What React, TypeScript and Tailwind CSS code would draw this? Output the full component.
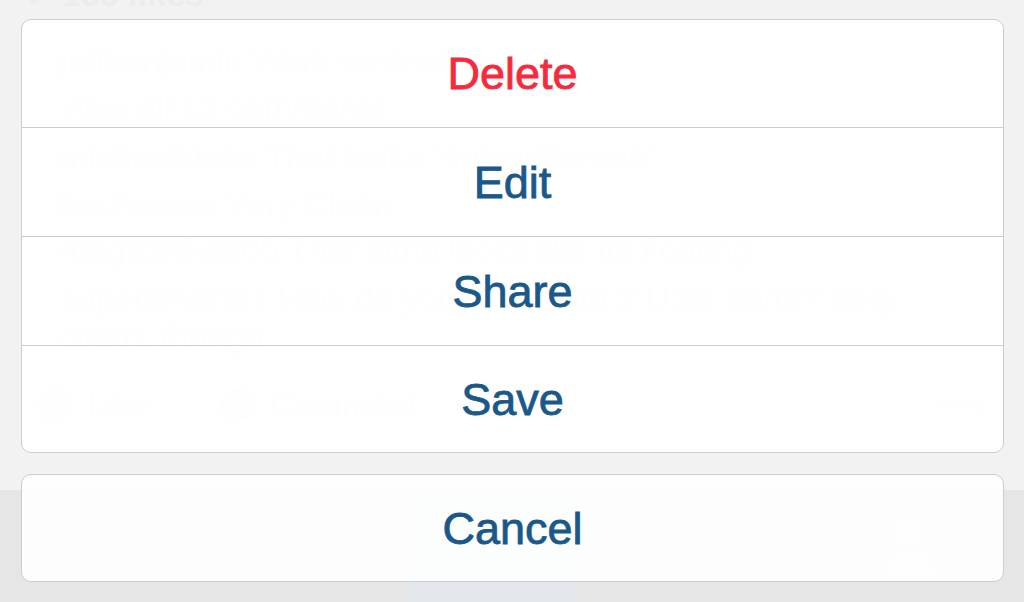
import React from "react";

const comments = [
  { t: "jeffbenjamin Work environment.", mt: "mt-[26px]" },
  { t: "view all 12 comments", mt: "mt-[7px]" },
  { t: "michaelkisan That looks \u201csplendiferous\u201d", mt: "mt-[9px]" },
  { t: "hachemos Very Clean", mt: "mt-[8px]" },
  { t: "magicmike005 That lamp looks like its floating", mt: "mt-[5px]" },
  { t: "supersmart07 How do you work with 2 USB ports? Very", mt: "mt-[9px]" },
  { t: "clean. though", mt: "mt-[-3px]" },
];

function Background() {
  return (
    <div className="flex flex-col h-full">
      <div className="h-[490px] flex flex-col">
        <div className="flex items-center gap-[16px] pl-[20px] mt-[-26px] h-[40px] text-[34px] font-bold text-[#eaedf0] leading-none">
          <svg width="26" height="24" viewBox="0 0 24 22">
            <path d="M12 21 L2.5 11.5 A5.5 5.5 0 0 1 12 3.5 A5.5 5.5 0 0 1 21.5 11.5 Z" fill="#eaedf0" />
          </svg>
          <span>155 likes</span>
        </div>
        <div className="flex flex-col pl-[60px] text-[34px] leading-[40px] text-[#dcdcdc]">
          {comments.map((c, i) => (
            <div key={i} className={c.mt + " whitespace-nowrap"}>
              {c.t}
            </div>
          ))}
        </div>
        <div className="flex items-center mt-[24px] pl-[37px] pr-[40px] text-[34px] text-[#e0e0e0]">
          <div className="w-[35px] h-[35px] rounded-full bg-[#e0e0e0]" />
          <span className="ml-[16px]">Like</span>
          <div className="ml-[70px] w-[35px] h-[33px] rounded-full bg-[#e0e0e0]" />
          <span className="ml-[15px]">Comment</span>
          <div className="ml-auto flex gap-[4px]">
            <div className="w-[13px] h-[13px] rounded-full bg-[#e0e0e0]" />
            <div className="w-[13px] h-[13px] rounded-full bg-[#e0e0e0]" />
            <div className="w-[13px] h-[13px] rounded-full bg-[#e0e0e0]" />
          </div>
        </div>
      </div>
      <div className="flex-1 bg-[#e6e6e6] flex">
        <div className="w-[408px]" />
        <div className="w-[170px] bg-[#e3e7eb] flex justify-center pt-[48px]">
          <div className="w-[34px] h-[34px] rounded-full border-[5px] border-[#e8e8e8]" />
        </div>
        <div className="flex-1" />
        <div className="w-[60px] flex flex-col items-center pt-[26px] mr-[85px]">
          <div className="w-[24px] h-[30px] rounded-full bg-[#f0f0f0]" />
          <div className="w-[52px] h-[26px] rounded-t-full bg-[#f0f0f0] mt-[4px]" />
        </div>
      </div>
    </div>
  );
}

function Row({ label, red, h, last }: { label: string; red?: boolean; h: string; last?: boolean }) {
  return (
    <div
      className={
        h +
        " flex items-center justify-center " +
        (last ? "" : "border-b-[1.5px] border-[#cdcdcd]")
      }
    >
      <span
        className={
          "text-[45px] leading-none [-webkit-text-stroke:0.8px_currentColor] " +
          (red ? "text-[#f42b3d]" : "text-[#1a588a]")
        }
      >
        {label}
      </span>
    </div>
  );
}

export default function App() {
  return (
    <div
      className="relative w-[1024px] h-[602px] overflow-hidden bg-[#f2f2f2]"
      style={{ fontFamily: '"Liberation Sans", Arial, sans-serif' }}
    >
      <Background />
      <div className="absolute inset-0 flex flex-col pt-[19px] pl-[21px] pr-[20px]">
        <div className="rounded-[10px] border-[1.5px] border-[#cdcdcd] bg-white/95 overflow-hidden">
          <Row label="Delete" red h="h-[108px]" />
          <Row label="Edit" h="h-[109px]" />
          <Row label="Share" h="h-[109px]" />
          <Row label="Save" h="h-[106px]" last />
        </div>
        <div className="mt-[21px] h-[108px] rounded-[10px] border-[1.5px] border-[#cdcdcd] bg-white/90 flex items-center justify-center">
          <span className="text-[45px] leading-none text-[#1a588a] [-webkit-text-stroke:0.8px_currentColor]">
            Cancel
          </span>
        </div>
      </div>
    </div>
  );
}
